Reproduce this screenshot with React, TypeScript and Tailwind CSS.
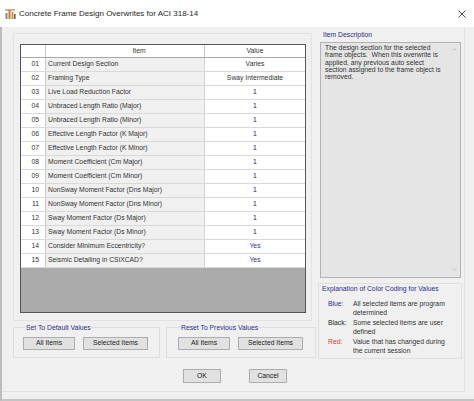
import React from "react";

const rows: [string, string, string][] = [
  ["01", "Current Design Section", "Varies"],
  ["02", "Framing Type", "Sway Intermediate"],
  ["03", "Live Load Reduction Factor", "1"],
  ["04", "Unbraced Length Ratio (Major)", "1"],
  ["05", "Unbraced Length Ratio (Minor)", "1"],
  ["06", "Effective Length Factor (K Major)", "1"],
  ["07", "Effective Length Factor (K Minor)", "1"],
  ["08", "Moment Coefficient (Cm Major)", "1"],
  ["09", "Moment Coefficient (Cm Minor)", "1"],
  ["10", "NonSway Moment Factor (Dns Major)", "1"],
  ["11", "NonSway Moment Factor (Dns Minor)", "1"],
  ["12", "Sway Moment Factor (Ds Major)", "1"],
  ["13", "Sway Moment Factor (Ds Minor)", "1"],
  ["14", "Consider Minimum Eccentricity?", "Yes"],
  ["15", "Seismic Detailing in CSiXCAD?", "Yes"],
];

function valueColor(v: string) {
  if (v === "Yes") return "text-[#2b2bb0]";
  if (v === "1") return "text-[#23235e]";
  return "text-[#333333]";
}

function Btn({ label, w }: { label: string; w: string }) {
  return (
    <div
      className={`${w} h-[13px] bg-[#e1e1e1] border border-[#adadad] flex items-center justify-center text-[6.8px] leading-none text-[#222]`}
    >
      {label}
    </div>
  );
}

function Group({
  title,
  children,
  w,
  pl,
}: {
  title: string;
  children: React.ReactNode;
  w: string;
  pl: string;
}) {
  return (
    <fieldset className={`${w} h-[35px] border border-[#dedede] ${pl} pb-[6px]`}>
      <legend className="text-[6.8px] leading-[9px] text-[#2b2b95] ml-[3px]">{title}</legend>
      <div className="flex gap-[8px] pt-[5px]">{children}</div>
    </fieldset>
  );
}

export default function App() {
  return (
    <div className="w-[474px] h-[401px] flex flex-col bg-white overflow-hidden font-['Liberation_Sans',Arial,sans-serif]">
      {/* Title bar */}
      <div className="h-[27px] flex items-center pl-[5px] pr-[8px] bg-white shrink-0">
        <svg width="11" height="10" viewBox="0 0 11 10" className="mr-[3px]">
          <rect x="0.5" y="4" width="2" height="6" fill="#7a8aa0" />
          <rect x="3.5" y="1" width="2" height="9" fill="#d07a20" />
          <rect x="6.5" y="3" width="2" height="7" fill="#d89030" />
          <rect x="9" y="5" width="1.6" height="5" fill="#5a6a80" />
          <rect x="0" y="0.5" width="10" height="1" fill="#9a7040" />
        </svg>
        <span className="text-[8px] text-[#1e1e1e] leading-none">
          Concrete Frame Design Overwrites for ACI 318-14
        </span>
        <svg width="8" height="8" viewBox="0 0 8 8" className="ml-auto">
          <path d="M0.5 0.5 L7.5 7.5 M7.5 0.5 L0.5 7.5" stroke="#333" strokeWidth="0.9" />
        </svg>
      </div>

      {/* Body */}
      <div className="flex-1 flex flex-col bg-[#f0f0f0] border-l-2 border-[#bcbcbc] border-b-2 border-b-[#c4c4c4]">
        <div className="w-[463px] h-[365px] border-r border-b border-[#e2e2e2] flex flex-col">
          <div className="flex pl-[11px] pt-[3px]">
            {/* Left column */}
            <div className="w-[303px] flex flex-col pt-[3px]">
              <div className="w-[299px] h-[288px] border border-[#e2e2e2] pt-[10px] pl-[6px]">
                <div className="w-[286px] h-[269px] border border-[#555] flex flex-col text-[6.8px] text-[#333]">
                  <div className="h-[13px] flex border-b border-[#a8a8a8] bg-white shrink-0">
                    <div className="w-[25px] border-r border-[#c8c8c8]" />
                    <div className="w-[159px] border-r border-[#c8c8c8] flex items-center justify-center pl-[28px]">
                      Item
                    </div>
                    <div className="w-[100px] flex items-center justify-center">Value</div>
                  </div>
                  {rows.map(([n, item, v]) => (
                    <div key={n} className="h-[14px] flex border-b border-[#d9d9d9] shrink-0">
                      <div className="w-[25px] border-r border-[#c8c8c8] bg-white flex items-center justify-end pr-[6px]">
                        {n}
                      </div>
                      <div className="w-[159px] border-r border-[#d4d4d4] bg-[#f0f0f0] flex items-center pl-[2px] whitespace-nowrap">
                        {item}
                      </div>
                      <div className={`w-[100px] bg-white flex items-center justify-center ${valueColor(v)}`}>
                        {v}
                      </div>
                    </div>
                  ))}
                  <div className="flex-1 bg-[#ababab]" />
                </div>
              </div>
              <div className="flex gap-[6px] mt-[2px]">
                <Group title="Set To Default Values" w="w-[147px]" pl="pl-[9px]">
                  <Btn label="All Items" w="w-[52px]" />
                  <Btn label="Selected Items" w="w-[65px]" />
                </Group>
                <Group title="Reset To Previous Values" w="w-[150px]" pl="pl-[11px]">
                  <Btn label="All Items" w="w-[52px]" />
                  <Btn label="Selected Items" w="w-[65px]" />
                </Group>
              </div>
            </div>

            {/* Right column */}
            <div className="w-[141px] ml-[4px] flex flex-col">
              <div className="h-[9px] leading-[9px] text-[6.8px] text-[#2b2b95] pl-[3px]">
                Item Description
              </div>
              <div className="mt-[3px] h-[236px] border border-[#b2b2b2] bg-[#e5e5e5] flex">
                <div className="flex-1 pl-[4px] pt-[1px] text-[6.8px] leading-[7.3px] text-[#333] whitespace-pre">
                  <div>The design section for the selected</div>
                  <div>frame objects.  When this overwrite is</div>
                  <div>applied, any previous auto select</div>
                  <div>section assigned to the frame object is</div>
                  <div>removed.</div>
                </div>
                <div className="w-[11px] flex flex-col justify-between items-center pt-[5px] pb-[6px]">
                  <svg width="5" height="3" viewBox="0 0 5 3">
                    <path d="M0.5 2.5 L2.5 0.5 L4.5 2.5" stroke="#b4b4b4" strokeWidth="0.8" fill="none" />
                  </svg>
                  <svg width="5" height="3" viewBox="0 0 5 3">
                    <path d="M0.5 0.5 L2.5 2.5 L4.5 0.5" stroke="#b4b4b4" strokeWidth="0.8" fill="none" />
                  </svg>
                </div>
              </div>
              <div className="-ml-[2px] w-[144px] mt-[5px] h-[76px] border border-[#e0e0e0] flex flex-col">
                <div className="h-[9px] leading-[9px] text-[6.8px] text-[#2b2b95] pl-[3px]">
                  Explanation of Color Coding for Values
                </div>
                <div className="flex flex-col gap-[1px] mt-[6px] pl-[9px] text-[6.8px] leading-[9px] text-[#333]">
                  <div className="flex">
                    <div className="w-[25px] text-[#2b2bb0]">Blue:</div>
                    <div>
                      <div>All selected items are program</div>
                      <div>determined</div>
                    </div>
                  </div>
                  <div className="flex">
                    <div className="w-[25px] text-[#1e1e1e]">Black:</div>
                    <div>
                      <div>Some selected items are user</div>
                      <div>defined</div>
                    </div>
                  </div>
                  <div className="flex">
                    <div className="w-[25px] text-[#e03a3a]">Red:</div>
                    <div>
                      <div>Value that has changed during</div>
                      <div>the current session</div>
                    </div>
                  </div>
                </div>
              </div>
            </div>
          </div>

          {/* OK / Cancel */}
          <div className="flex justify-center gap-[28px] mt-[10px] pl-[4px]">
            <div className="w-[38px] h-[14px] bg-[#e1e1e1] border border-[#adadad] flex items-center justify-center text-[6.8px] text-[#222]">
              OK
            </div>
            <div className="w-[38px] h-[14px] bg-[#e1e1e1] border border-[#adadad] flex items-center justify-center text-[6.8px] text-[#222]">
              Cancel
            </div>
          </div>
        </div>
      </div>
    </div>
  );
}
